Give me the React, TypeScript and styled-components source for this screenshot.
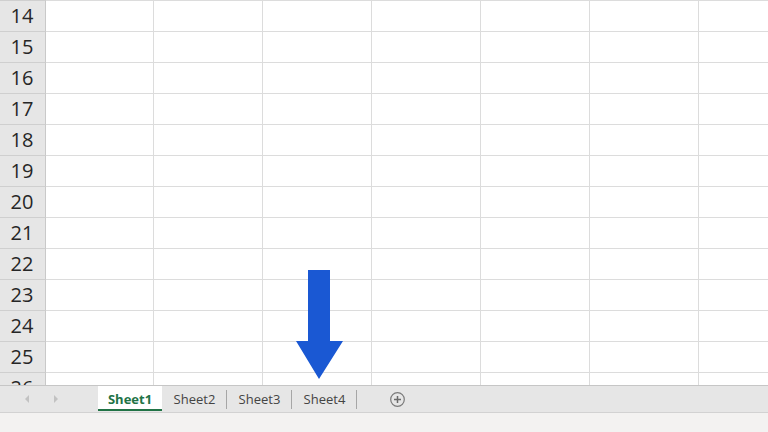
import styled, {createGlobalStyle} from "styled-components";

const GlobalStyle = createGlobalStyle`
  html, body {
    margin: 0;
    padding: 0;
    background: #fff;
  }
  body {
    font-family: "Open Sans", "Noto Sans", "Liberation Sans", sans-serif;
  }
`

const Screen = styled.div`
  position: relative;
  width: 768px;
  height: 432px;
  display: flex;
  flex-direction: column;
  overflow: hidden;
`

const Grid = styled.div`
  height: 385px;
  overflow: hidden;
  display: flex;
  flex-direction: column;
`

const Row = styled.div`
  display: flex;
  flex: 0 0 31px;
  height: 31px;
  box-sizing: border-box;
  border-top: 1px solid #dcdcdc;
`

const RowHeader = styled.div`
  flex: 0 0 46px;
  box-sizing: border-box;
  background: #e6e6e6;
  border-right: 1px solid #c9c9c9;
  margin-top: -1px;
  border-top: 1px solid #cfcfcf;
  display: flex;
  align-items: center;
  justify-content: center;
  padding-right: 1px;
  font-size: 20px;
  color: #262626;
  line-height: 1;
`

const Cell = styled.div<{ $w: number }>`
  flex: 0 0 ${p => p.$w}px;
  box-sizing: border-box;
  border-right: 1px solid #dcdcdc;
`

const TabBar = styled.div`
  flex: 0 0 28px;
  box-sizing: border-box;
  background: #e6e6e6;
  border-top: 1px solid #c6c6c6;
  border-bottom: 1px solid #d2d2d2;
  display: flex;
  align-items: stretch;
`

const NavArea = styled.div`
  flex: 0 0 98px;
  display: flex;
  align-items: center;
  padding-left: 25px;
  gap: 25px;
  box-sizing: border-box;
`

const NavArrow = styled.span<{ $dir: "left" | "right" }>`
  width: 0;
  height: 0;
  border-top: 4px solid transparent;
  border-bottom: 4px solid transparent;
  ${p => p.$dir === "left"
    ? "border-right: 4px solid #c2c2c2;"
    : "border-left: 4px solid #c2c2c2;"}
`

const Tab = styled.div<{ $active?: boolean }>`
  position: relative;
  flex: 0 0 ${p => (p.$active ? 64 : 65)}px;
  box-sizing: border-box;
  height: 25px;
  display: flex;
  align-items: center;
  justify-content: center;
  font-size: 13px;
  color: ${p => (p.$active ? "#217346" : "#444")};
  font-weight: ${p => (p.$active ? 700 : 400)};
  background: ${p => (p.$active ? "#fff" : "transparent")};
  border-bottom: ${p => (p.$active ? "2px solid #217346" : "none")};
  padding-top: ${p => (p.$active ? "2px" : "0")};

  ${p => !p.$active && `
    &::after {
      content: "";
      position: absolute;
      right: 0;
      top: 4px;
      height: 19px;
      width: 1px;
      background: #a6a6a6;
    }
  `}
`

const AddButton = styled.div`
  margin-left: 33px;
  align-self: center;
  width: 15px;
  height: 15px;
  display: flex;
  margin-top: 1px;
`

const StatusBar = styled.div`
  flex: 1;
  background: #f3f2f1;
`

const ArrowOverlay = styled.svg`
  position: absolute;
  left: 296px;
  top: 270px;
`

const rows = [14, 15, 16, 17, 18, 19, 20, 21, 22, 23, 24, 25, 26]
const cols = [108, 109, 109, 109, 109, 109, 109]
const sheets = ["Sheet2", "Sheet3", "Sheet4"]

const App = () => {
  return (
    <>
      <GlobalStyle/>
      <Screen>
        <Grid>
          {rows.map(n => (
            <Row key={n}>
              <RowHeader>{n}</RowHeader>
              {cols.map((w, i) => <Cell key={i} $w={w}/>)}
            </Row>
          ))}
        </Grid>
        <TabBar>
          <NavArea>
            <NavArrow $dir="left"/>
            <NavArrow $dir="right"/>
          </NavArea>
          <Tab $active>Sheet1</Tab>
          {sheets.map(s => <Tab key={s}>{s}</Tab>)}
          <AddButton>
            <svg width="15" height="15" viewBox="0 0 15 15">
              <circle cx="7.5" cy="7.5" r="6.8" fill="none" stroke="#7a7a7a" strokeWidth="1.2"/>
              <path d="M7.5 4v7M4 7.5h7" stroke="#6a6a6a" strokeWidth="1.5"/>
            </svg>
          </AddButton>
        </TabBar>
        <StatusBar/>
        <ArrowOverlay width="47" height="110" viewBox="0 0 47 110">
          <path d="M12 0H34V71H47L23 109L0 71H12Z" fill="#1a58d3"/>
        </ArrowOverlay>
      </Screen>
    </>
  )
}

export default App;
